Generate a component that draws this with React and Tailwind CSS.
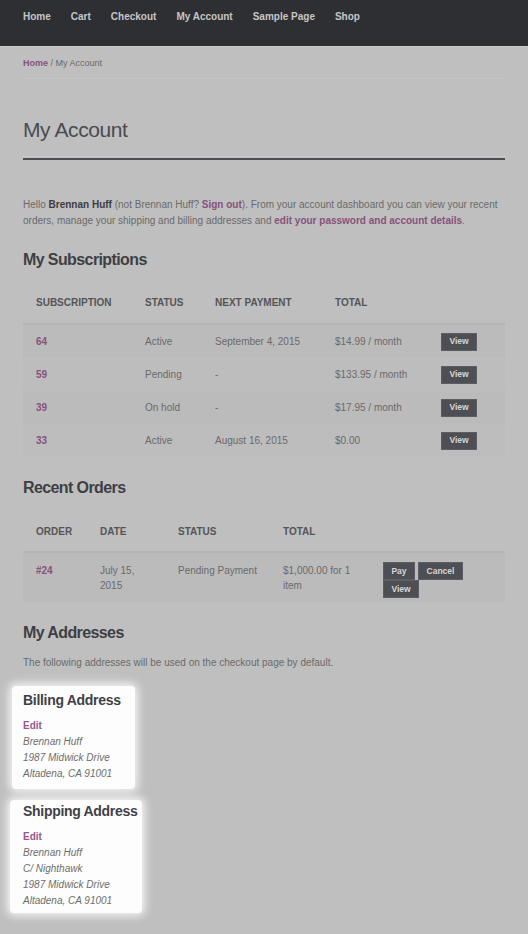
const navLinks = ["Home", "Cart", "Checkout", "My Account", "Sample Page", "Shop"];

const subscriptions = [
  { id: "64", status: "Active", next: "September 4, 2015", total: "$14.99 / month" },
  { id: "59", status: "Pending", next: "-", total: "$133.95 / month" },
  { id: "39", status: "On hold", next: "-", total: "$17.95 / month" },
  { id: "33", status: "Active", next: "August 16, 2015", total: "$0.00" },
];

function Btn({ children, w }) {
  return (
    <span
      className={`inline-flex h-[18px] items-center justify-center bg-[#4e4f55] border border-[#5d5e63] text-[8.5px] font-bold text-[#d6d6d6] ${w}`}
    >
      {children}
    </span>
  );
}

export default function App() {
  return (
    <div className="min-h-screen bg-[#bfbfbf] font-['Liberation_Sans',Arial,sans-serif] text-[10px] text-[#6a6a6a]">
      {/* top bar */}
      <nav className="h-[47px] bg-[#2e2f33] border-b border-[#c9c9c9] px-[23px] pt-[11px]">
        <ul className="flex gap-[20px] leading-[12px] text-[10px] font-bold text-[#c6c6c6]">
          {navLinks.map((l) => (
            <li key={l}>{l}</li>
          ))}
        </ul>
      </nav>

      <main className="px-[23px]">
        {/* breadcrumb */}
        <div className="pt-[10px] pb-[9px] border-b border-[#c5c5c5] text-[9px] leading-[12px]">
          <span className="font-bold text-[#87527c]">Home</span> / My Account
        </div>

        {/* title */}
        <h1 className="mt-[38px] text-[21px] leading-[26px] tracking-[-0.4px] text-[#4a4b50]">
          My Account
        </h1>
        <div className="mt-[13px] h-px bg-[#c9c9c9]" />
        <div className="mt-px h-[2px] bg-[#4c4d52]" />

        <p className="mt-[37px] leading-[16px]">
          Hello <b className="text-[#3c3c3f]">Brennan Huff</b> (not Brennan Huff?{" "}
          <b className="text-[#87527c]">Sign out</b>). From your account dashboard you can view
          your recent orders, manage your shipping and billing addresses and{" "}
          <b className="text-[#87527c]">edit your password and account details</b>.
        </p>

        {/* subscriptions */}
        <h2 className="mt-[21px] text-[16px] leading-[20px] font-bold tracking-[-0.6px] text-[#3e3f44]">
          My Subscriptions
        </h2>
        <div className="mt-[14px]">
          <div className="flex h-[41px] pt-[12px] pl-[13px] border-b-2 border-[#b4b4b4] font-bold leading-[14px] text-[#555558]">
            <div className="w-[109px]">SUBSCRIPTION</div>
            <div className="w-[70px]">STATUS</div>
            <div className="w-[120px]">NEXT PAYMENT</div>
            <div className="w-[106px]">TOTAL</div>
          </div>
          {subscriptions.map((s, i) => (
            <div
              key={s.id}
              className={`flex h-[33px] items-center pl-[13px] ${i % 2 === 0 ? "bg-[#bbbbbb]" : "bg-[#bdbdbd]"}`}
            >
              <div className="w-[109px] font-bold text-[#87527c]">{s.id}</div>
              <div className="w-[70px]">{s.status}</div>
              <div className="w-[120px]">{s.next}</div>
              <div className="w-[106px]">{s.total}</div>
              <Btn w="w-[36px]">View</Btn>
            </div>
          ))}
        </div>

        {/* orders */}
        <h2 className="mt-[21px] text-[16px] leading-[20px] font-bold tracking-[-0.6px] text-[#3e3f44]">
          Recent Orders
        </h2>
        <div className="mt-[15px]">
          <div className="flex h-[40px] pt-[12px] pl-[13px] border-b-2 border-[#b4b4b4] font-bold leading-[14px] text-[#555558]">
            <div className="w-[64px]">ORDER</div>
            <div className="w-[78px]">DATE</div>
            <div className="w-[105px]">STATUS</div>
            <div className="w-[100px]">TOTAL</div>
          </div>
          <div className="flex h-[50px] items-start pl-[13px] bg-[#bbbbbb] leading-[15px]">
            <div className="w-[64px] pt-[10px] font-bold text-[#87527c]">#24</div>
            <div className="w-[78px] pt-[10px] pr-[24px]">July 15, 2015</div>
            <div className="w-[105px] pt-[10px]">Pending Payment</div>
            <div className="w-[100px] pt-[10px] pr-[18px]">$1,000.00 for 1 item</div>
            <div className="pt-[9px] flex flex-wrap w-[84px] gap-x-[3px]">
              <Btn w="w-[32px]">Pay</Btn>
              <Btn w="w-[45px]">Cancel</Btn>
              <Btn w="w-[36px]">View</Btn>
            </div>
          </div>
        </div>

        {/* addresses */}
        <h2 className="mt-[20px] text-[16px] leading-[20px] font-bold tracking-[-0.6px] text-[#3e3f44]">
          My Addresses
        </h2>
        <p className="mt-[12px] leading-[16px]">
          The following addresses will be used on the checkout page by default.
        </p>

        <div className="mt-[15px] -ml-[11px] w-[123px] pl-[11px] pt-[5px] pb-[7px] rounded-[4px] bg-[#fdfdfd] shadow-[0_0_8px_3px_rgba(253,253,253,0.85)]">
          <h3 className="text-[14px] leading-[18px] font-bold tracking-[-0.3px] text-[#404146]">
            Billing Address
          </h3>
          <div className="mt-[9px] leading-[16px] font-bold text-[#96588a]">Edit</div>
          <address className="leading-[16px] italic text-[#6d6d6d]">
            Brennan Huff
            <br />
            1987 Midwick Drive
            <br />
            Altadena, CA 91001
          </address>
        </div>

        <div className="mt-[11px] -ml-[13px] w-[132px] pl-[13px] pt-[2px] pb-[4px] rounded-[4px] bg-[#fdfdfd] shadow-[0_0_8px_3px_rgba(253,253,253,0.85)]">
          <h3 className="text-[14px] leading-[18px] font-bold tracking-[-0.3px] text-[#404146]">
            Shipping Address
          </h3>
          <div className="mt-[9px] leading-[16px] font-bold text-[#96588a]">Edit</div>
          <address className="leading-[16px] italic text-[#6d6d6d]">
            Brennan Huff
            <br />
            C/ Nighthawk
            <br />
            1987 Midwick Drive
            <br />
            Altadena, CA 91001
          </address>
        </div>
      </main>
    </div>
  );
}
